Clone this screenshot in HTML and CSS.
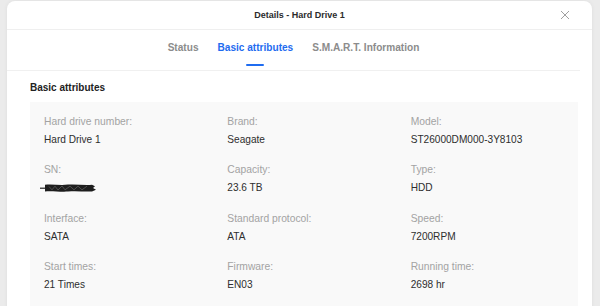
FILE: index.html
```html
<!DOCTYPE html>
<html>
<head>
<meta charset="utf-8">
<link rel="stylesheet" href="styles.css">
</head>
<body>
<div class="modal">
  <div class="header">
    <span></span>
    <div class="title">Details - Hard Drive 1</div>
    <div class="close">
      <svg width="10" height="10" viewBox="0 0 10 10"><path d="M1 1L9 9M9 1L1 9" stroke="#a0a0a0" stroke-width="1" fill="none"/></svg>
    </div>
  </div>
  <div class="tabs">
    <div class="tab">Status</div>
    <div class="tab active">Basic attributes<span class="bar"></span></div>
    <div class="tab">S.M.A.R.T. Information</div>
  </div>
  <div class="content">
    <div class="heading">Basic attributes</div>
    <div class="panel">
      <div class="item"><div class="label">Hard drive number:</div><div class="value">Hard Drive 1</div></div>
      <div class="item"><div class="label">Brand:</div><div class="value">Seagate</div></div>
      <div class="item"><div class="label">Model:</div><div class="value">ST26000DM000-3Y8103</div></div>
      <div class="item"><div class="label">SN:</div><div class="value"><svg class="redact" width="58" height="10" viewBox="0 0 58 10"><path d="M0 5.2H6" stroke="#222" stroke-width="1.2"/><path d="M5 1.8C12 1 20 2.5 28 1.6C36 1 44 2.5 52 1.8L55 3.2L53 5L56 6.8L52 8.4C44 9 36 7.5 28 8.6C20 9.2 12 7.6 5 8.4Z" fill="#1e1e1e"/><path d="M9 3.5L12 6.8L15 3.2L18 7L22 3L25 6.8L30 3.2L34 6.8L38 3.2L42 6.8L47 3.2" stroke="#5a5a5a" stroke-width="0.8" fill="none"/></svg></div></div>
      <div class="item"><div class="label">Capacity:</div><div class="value">23.6 TB</div></div>
      <div class="item"><div class="label">Type:</div><div class="value">HDD</div></div>
      <div class="item"><div class="label">Interface:</div><div class="value">SATA</div></div>
      <div class="item"><div class="label">Standard protocol:</div><div class="value">ATA</div></div>
      <div class="item"><div class="label">Speed:</div><div class="value">7200RPM</div></div>
      <div class="item"><div class="label">Start times:</div><div class="value">21 Times</div></div>
      <div class="item"><div class="label">Firmware:</div><div class="value">EN03</div></div>
      <div class="item"><div class="label">Running time:</div><div class="value">2698 hr</div></div>
    </div>
  </div>
</div>
</body>
</html>
```
FILE: styles.css
```css
html, body {
  margin: 0;
  padding: 0;
}
body {
  background: #ebebeb;
  height: 306px;
  overflow: hidden;
  font-family: "Liberation Sans", Arial, sans-serif;
}
.modal {
  margin: 1px 8px 0 7px;
  height: 320px;
  background: #fff;
  border-radius: 8px 8px 0 0;
  box-shadow: 0 0 4px rgba(0,0,0,0.06);
}
.header {
  height: 28px;
  border-bottom: 1px solid #efefef;
  display: grid;
  grid-template-columns: 1fr auto 1fr;
  align-items: center;
}
.title {
  font-size: 9px;
  font-weight: bold;
  color: #2b2b2b;
}
.close {
  justify-self: end;
  padding-right: 22px;
  display: flex;
}
.tabs {
  margin-right: 12px;
  height: 40px;
  border-bottom: 1px solid #f0f0f0;
  display: flex;
  justify-content: center;
  gap: 19px;
}
.tab {
  padding-top: 11px;
  font-size: 10.1px;
  line-height: 14px;
  font-weight: bold;
  color: #8c8c8c;
  display: flex;
  flex-direction: column;
  align-items: center;
}
.tab.active {
  color: #1f6cf0;
}
.bar {
  margin-top: 9px;
  width: 18px;
  height: 2px;
  background: #1f6cf0;
  border-radius: 1px;
}
.content {
  padding: 10px 14px 0 23px;
}
.heading {
  font-size: 10px;
  font-weight: bold;
  line-height: 14px;
  color: #222;
  margin-bottom: 7px;
}
.panel {
  background: #f9f9f9;
  padding: 11px 14px 20px 14px;
  display: grid;
  grid-template-columns: repeat(3, 1fr);
  column-gap: 30px;
  row-gap: 12.3px;
}
.label {
  font-size: 10.3px;
  line-height: 18px;
  color: #a3a3a3;
}
.value {
  font-size: 10.1px;
  line-height: 18px;
  color: #2e2e2e;
  height: 18px;
  display: flex;
  align-items: center;
}
.redact {
  margin-left: -4px;
}
```
